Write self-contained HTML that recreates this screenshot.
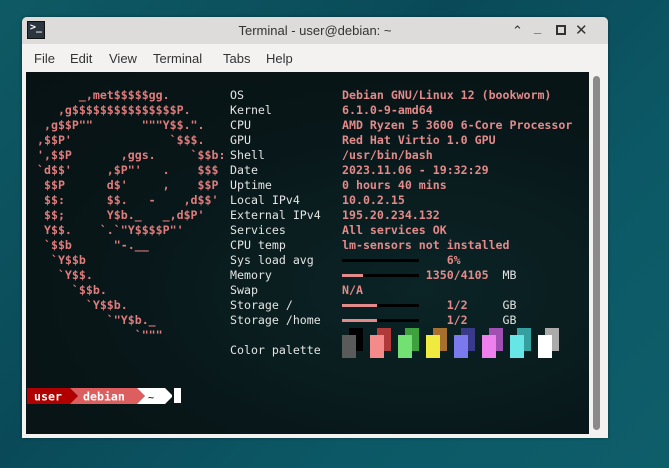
<!DOCTYPE html>
<html><head><meta charset="utf-8"><style>
*{margin:0;padding:0;box-sizing:border-box}
body{width:669px;height:468px;overflow:hidden;position:relative;font-family:"Liberation Sans","DejaVu Sans",sans-serif;
background:linear-gradient(135deg,#0e5a64 0%,#0a4a58 40%,#0c5866 70%,#0e5e6a 100%)}
.win{position:absolute;left:22px;top:17px;width:586px;height:421px;background:#f3f2f1;border-radius:5px 5px 0 0;box-shadow:0 0 3px rgba(0,0,0,.4)}
.title{position:absolute;left:0;top:0;width:586px;height:27px;background:#dedcda;border-radius:5px 5px 0 0;font-size:13px;color:#333;text-align:center;line-height:27px}
.ticon{position:absolute;left:5px;top:4px;width:18px;height:18px;background:#2b3540;border:1px solid #111;color:#fff;font:bold 10px "DejaVu Sans Mono",monospace;line-height:12px;padding-left:2px;text-align:left}
.menu{position:absolute;top:27px;left:0;height:28px;font-size:13px;color:#333;line-height:30px}
.menu span{position:absolute;top:0}
.term{position:absolute;left:4px;top:55px;width:563px;height:362px;background:radial-gradient(ellipse at 70% 60%,#0b2426 0%,#081618 60%,#071214 100%)}
.sb{position:absolute;left:567px;top:55px;width:15px;height:362px;background:#f3f2f1}
.sb div{position:absolute;left:4px;top:4px;width:7px;height:354px;background:#8a8a8a;border-radius:4px}
pre{position:absolute;font-family:"DejaVu Sans Mono",monospace;font-size:11.6px;line-height:15px;white-space:pre}
.logo{left:37px;top:88px;color:#e07c7c;font-weight:bold}
.lab{left:230px;top:88px;color:#e4e4e4}
.val{left:342px;top:88px;color:#e38a8a;font-weight:bold}
.bar{position:absolute;height:3px;background:#000}
.bar i{position:absolute;left:0;top:0;height:3px;background:#e38a8a}
.sq{position:absolute;width:14px;height:23px}
</style></head><body>
<div class="win">
 <div class="title"><div class="ticon">&gt;_</div>Terminal - user@debian: ~
  <span style="position:absolute;left:490px;top:0;font-size:13px">&#8963;</span>
  <span style="position:absolute;left:512px;top:-3px;font-weight:bold">_</span>
  <span style="position:absolute;left:534px;top:8px;width:10px;height:10px;border:2px solid #333"></span>
  <span style="position:absolute;left:553px;top:0;font-size:15px;font-weight:bold">✕</span>
 </div>
 <div class="menu"><span style="left:12px">File</span><span style="left:48px">Edit</span><span style="left:87px">View</span><span style="left:131px">Terminal</span><span style="left:201px">Tabs</span><span style="left:244px">Help</span></div>
 <div class="term"></div>
 <div class="sb"><div></div></div>
</div>
<pre class="logo">      _,met$$$$$gg.
   ,g$$$$$$$$$$$$$$$P.
 ,g$$P""       """Y$$.".
,$$P'              `$$$.
',$$P       ,ggs.     `$$b:
`d$$'     ,$P"'   .    $$$
 $$P      d$'     ,    $$P
 $$:      $$.   -    ,d$$'
 $$;      Y$b._   _,d$P'
 Y$$.    `.`"Y$$$$P"'
 `$$b      "-.__
  `Y$$b
   `Y$$.
     `$$b.
       `Y$$b.
          `"Y$b._
              `"""</pre>
<pre class="lab">OS
Kernel
CPU
GPU
Shell
Date
Uptime
Local IPv4
External IPv4
Services
CPU temp
Sys load avg
Memory
Swap
Storage /
Storage /home

Color palette</pre>
<pre class="val">Debian GNU/Linux 12 (bookworm)
6.1.0-9-amd64
AMD Ryzen 5 3600 6-Core Processor
Red Hat Virtio 1.0 GPU
/usr/bin/bash
2023.11.06 - 19:32:29
0 hours 40 mins
10.0.2.15
195.20.234.132
All services OK
lm-sensors not installed
               6%
            1350/4105  <span style="color:#e4e4e4;font-weight:normal">MB</span>
N/A
               1/2     <span style="color:#e4e4e4;font-weight:normal">GB</span>
               1/2     <span style="color:#e4e4e4;font-weight:normal">GB</span></pre>
<div class="bar" style="left:342px;top:259px;width:77px"></div>
<div class="bar" style="left:342px;top:274px;width:77px"><i style="width:21px"></i></div>
<div class="bar" style="left:342px;top:304px;width:77px"><i style="width:35px"></i></div>
<div class="bar" style="left:342px;top:319px;width:77px"><i style="width:35px"></i></div>
<div class="sq" style="left:349px;top:328px;background:#000"></div><div class="sq" style="left:342px;top:335px;background:#5a5a5a"></div>
<div class="sq" style="left:377px;top:328px;background:#b03a3a"></div><div class="sq" style="left:370px;top:335px;background:#f58a8a"></div>
<div class="sq" style="left:405px;top:328px;background:#3ea13e"></div><div class="sq" style="left:398px;top:335px;background:#72e072"></div>
<div class="sq" style="left:433px;top:328px;background:#a8702e"></div><div class="sq" style="left:426px;top:335px;background:#f0ea40"></div>
<div class="sq" style="left:461px;top:328px;background:#3a3a8a"></div><div class="sq" style="left:454px;top:335px;background:#7a7aee"></div>
<div class="sq" style="left:489px;top:328px;background:#a050b0"></div><div class="sq" style="left:482px;top:335px;background:#ee80ee"></div>
<div class="sq" style="left:517px;top:328px;background:#36a0a0"></div><div class="sq" style="left:510px;top:335px;background:#66e6e6"></div>
<div class="sq" style="left:545px;top:328px;background:#aaaaaa"></div><div class="sq" style="left:538px;top:335px;background:#ffffff"></div>
<svg style="position:absolute;left:27px;top:388px" width="145" height="16">
<polygon points="0,0 43,0 51,8 43,16 0,16" fill="#b00000"/>
<polygon points="43,0 110,0 118,8 110,16 43,16 51,8" fill="#dc5e5e"/>
<polygon points="110,0 138,0 146,8 138,16 110,16 118,8" fill="#ffffff"/>
<text x="7" y="12.5" fill="#fff" font-family="DejaVu Sans Mono" font-size="11.6" font-weight="bold">user</text>
<text x="56" y="12.5" fill="#fff" font-family="DejaVu Sans Mono" font-size="11.6" font-weight="bold">debian</text>
<text x="121" y="12.5" fill="#333" font-family="DejaVu Sans Mono" font-size="10" font-weight="bold">~</text>
</svg>
<div style="position:absolute;left:174px;top:388px;width:7px;height:15px;background:#fff"></div>
</body></html>
